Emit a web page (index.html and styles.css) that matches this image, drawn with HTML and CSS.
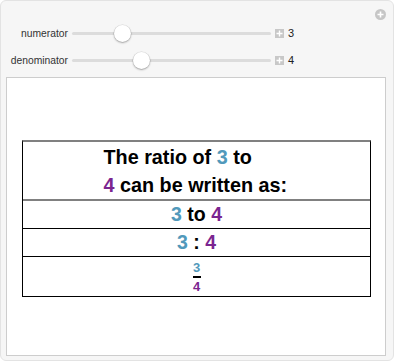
FILE: index.html
```html
<!DOCTYPE html>
<html>
<head>
<meta charset="utf-8">
<link rel="stylesheet" href="styles.css">
</head>
<body>
<div class="panel">
  <div class="topbar">
    <span class="addbtn"><svg width="11" height="11" viewBox="0 0 11 11"><circle cx="5.5" cy="5.5" r="5.5" fill="#c6c6c6"/><path d="M5.5 2.5v6M2.5 5.5h6" stroke="#fff" stroke-width="1.6"/></svg></span>
  </div>
  <div class="controls">
    <div class="ctl">
      <span class="lbl">numerator</span>
      <div class="track"><span class="thumb" style="left:50px"></span></div>
      <span class="pbox"><svg width="9" height="9" viewBox="0 0 9 9"><rect width="9" height="9" fill="#c8c8c8"/><path d="M4.5 1.5v6M1.5 4.5h6" stroke="#fff" stroke-width="1.4"/></svg></span>
      <span class="val">3</span>
    </div>
    <div class="ctl">
      <span class="lbl">denominator</span>
      <div class="track"><span class="thumb" style="left:69px"></span></div>
      <span class="pbox"><svg width="9" height="9" viewBox="0 0 9 9"><rect width="9" height="9" fill="#c8c8c8"/><path d="M4.5 1.5v6M1.5 4.5h6" stroke="#fff" stroke-width="1.4"/></svg></span>
      <span class="val">4</span>
    </div>
  </div>
  <div class="output">
    <div class="tbl">
      <div class="row head">
        <div class="headtxt">The ratio of <span class="n">3</span> to<br><span class="d">4</span> can be written as:</div>
      </div>
      <div class="row r2"><span class="n">3</span>&nbsp;to&nbsp;<span class="d">4</span></div>
      <div class="row r3"><span class="n">3</span>&nbsp;:&nbsp;<span class="d">4</span></div>
      <div class="row r4">
        <div class="frac"><span class="n">3</span><span class="bar"></span><span class="d">4</span></div>
      </div>
    </div>
  </div>
</div>
</body>
</html>
```
FILE: styles.css
```css
html, body { margin: 0; padding: 0; background: #fff; }
body { font-family: "Liberation Sans", Arial, sans-serif; }
.panel {
  border: 1px solid #e3e3e3;
  border-radius: 6px;
  background: #f6f6f6;
  box-sizing: border-box;
  width: 394px;
  height: 361px;
}
.topbar { height: 24px; display: flex; justify-content: flex-end; padding: 8px 7px 0 0; box-sizing: border-box; }
.addbtn { display: block; width: 11px; height: 11px; }
.addbtn svg { display: block; }
.controls { display: flex; flex-direction: column; gap: 11px; }
.ctl { display: flex; align-items: center; height: 16px; }
.lbl { text-align: right; font-size: 10.3px; color: #333; padding-right: 4px; box-sizing: border-box; width: 71px; }
.track { position: relative; width: 199px; height: 3px; background: #dcdcdc; border-radius: 2px; }
.thumb {
  position: absolute; top: -7px; width: 17px; height: 17px; margin-left: -8px;
  border-radius: 50%; background: #fff;
  box-shadow: 0 0 0 0.5px rgba(0,0,0,0.12), 0 1px 2px rgba(0,0,0,0.3);
}
.pbox { margin-left: 4px; width: 9px; height: 9px; }
.pbox svg { display: block; }
.val { margin-left: 4px; font-size: 11px; color: #222; }
.output {
  margin: 9px 0 0 5px;
  width: 380px;
  height: 279px;
  background: #fff;
  border: 1px solid #cdcdcd;
  box-sizing: border-box;
  padding: 62px 0 0 15px;
}
.tbl {
  width: 349px;
  border-left: 1px solid #000;
  border-right: 1px solid #000;
  border-bottom: 1px solid #000;
  border-top: 2px solid #808080;
  box-sizing: border-box;
  font-weight: bold;
  color: #000;
}
.row { display: flex; justify-content: center; align-items: center; font-size: 19.5px; }
.head { height: 57px; border-bottom: 2px solid #808080; }
.headtxt { width: 186px; text-align: left; line-height: 28px; padding-top: 1px; white-space: nowrap; font-size: 19.8px; }
.r2 { height: 27px; border-bottom: 1px solid #000; }
.r3 { height: 27px; border-bottom: 1px solid #000; }
.r4 { height: 39px; }
.n { color: #5199bb; }
.d { color: #7b2590; }
.frac { display: flex; flex-direction: column; align-items: center; font-size: 13px; line-height: 12px; padding-top: 1px; }
.bar { width: 8px; height: 2px; background: #000; margin: 2px 0 3px; }
```
